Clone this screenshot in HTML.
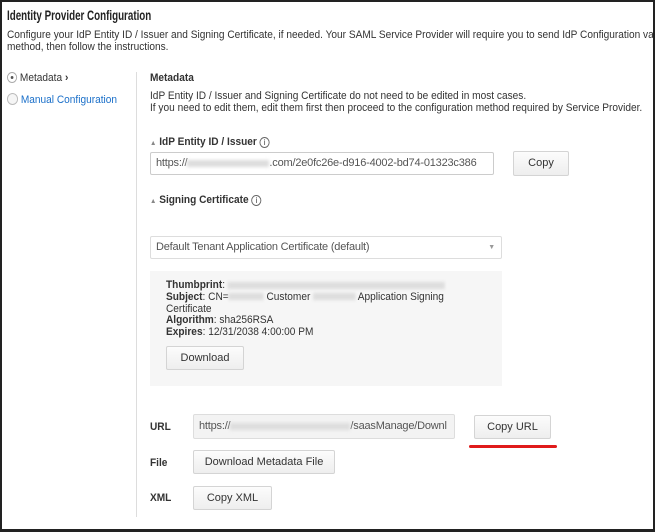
<!DOCTYPE html><html><head><style>
body{margin:0;width:655px;height:532px;overflow:hidden;background:#222;font-family:"Liberation Sans",sans-serif;}
#f{position:absolute;left:2px;top:2px;width:651px;height:527px;background:#fff;overflow:hidden;color:#333;}
.a{position:absolute;white-space:nowrap;font-size:11px;transform:scaleX(0.92);transform-origin:0 0;}
.b{font-weight:bold;}
.btn{position:absolute;border:1px solid #d4d4d4;border-radius:2px;background:linear-gradient(#fcfcfc,#eee);font-size:11px;color:#333;text-align:center;box-sizing:border-box;}
.inp{position:absolute;border:1px solid #ccc;border-radius:2px;box-sizing:border-box;font-size:11px;color:#555;padding-left:5px;white-space:nowrap;overflow:hidden;letter-spacing:-0.2px}
.blur{display:inline-block;height:7px;background:#ddd;filter:blur(1.5px);vertical-align:middle;}
.info{display:inline-block;width:9px;height:9px;border:1px solid #666;border-radius:50%;font-size:8px;line-height:9px;text-align:center;font-weight:normal;vertical-align:middle;}
</style></head><body><div id="f">
<div class="a b" style="left:5px;top:5px;font-size:14px;color:#222;transform:scaleX(0.7)">Identity Provider Configuration</div>
<div class="a" style="left:5px;top:27px;line-height:12px;">Configure your IdP Entity ID / Issuer and Signing Certificate, if needed. Your SAML Service Provider will require you to send IdP Configuration values<br>method, then follow the instructions.</div>
<div class="a" style="left:5px;top:70px;"><span style="display:inline-block;width:9px;height:9px;border:1px solid #aaa;border-radius:50%;vertical-align:-2px;position:relative"><span style="position:absolute;left:3px;top:3px;width:3px;height:3px;background:#555;border-radius:50%"></span></span> Metadata <b>›</b></div>
<div class="a" style="left:5px;top:91px;color:#1a6fc9"><span style="display:inline-block;width:10px;height:10px;border:1px solid #bbb;border-radius:50%;vertical-align:-2px;background:#f5f5f5"></span> Manual Configuration</div>
<div style="position:absolute;left:134px;top:70px;width:1px;height:445px;background:#ddd"></div>
<div class="a b" style="left:148px;top:70px;">Metadata</div>
<div class="a" style="left:148px;top:88px;line-height:12px;">IdP Entity ID / Issuer and Signing Certificate do not need to be edited in most cases.<br>If you need to edit them, edit them first then proceed to the configuration method required by Service Provider.</div>
<div class="a b" style="left:148px;top:134px;"><span style="font-size:7px;color:#888">▲</span> IdP Entity ID / Issuer <span class="info">i</span></div>
<div class="inp" style="left:148px;top:150px;width:344px;height:23px;line-height:21px;">https://<span class="blur" style="width:82px"></span>.com/2e0fc26e-d916-4002-bd74-01323c386</div>
<div class="btn" style="left:511px;top:149px;width:56px;height:25px;line-height:23px;">Copy</div>
<div class="a b" style="left:148px;top:192px;"><span style="font-size:7px;color:#888">▲</span> Signing Certificate <span class="info">i</span></div>
<div class="inp" style="left:148px;top:234px;width:352px;height:23px;line-height:21px;border-color:#ddd">Default Tenant Application Certificate (default)<span style="position:absolute;right:6px;top:0;font-size:7px;color:#999">▼</span></div>
<div style="position:absolute;left:148px;top:269px;width:352px;height:115px;background:#f6f6f6"></div>
<div class="a" style="left:164px;top:278px;line-height:11.8px;"><b>Thumbprint</b>: <span class="blur" style="width:236px"></span><br><b>Subject</b>: CN=<span class="blur" style="width:38px"></span> Customer <span class="blur" style="width:46px"></span> Application Signing<br>Certificate<br><b>Algorithm</b>: sha256RSA<br><b>Expires</b>: 12/31/2038 4:00:00 PM</div>
<div class="btn" style="left:164px;top:344px;width:78px;height:24px;line-height:22px;">Download</div>
<div class="a b" style="left:148px;top:419px;">URL</div>
<div class="inp" style="left:191px;top:412px;width:262px;height:25px;line-height:23px;background:#f3f3f3;border-color:#ddd">https://<span class="blur" style="width:120px"></span>/saasManage/Downl</div>
<div class="btn" style="left:472px;top:413px;width:77px;height:24px;line-height:22px;">Copy URL</div>
<div style="position:absolute;left:467px;top:443px;width:88px;height:3px;background:#e01b1b;border-radius:2px"></div>
<div class="a b" style="left:148px;top:455px;">File</div>
<div class="btn" style="left:191px;top:448px;width:142px;height:24px;line-height:22px;">Download Metadata File</div>
<div class="a b" style="left:148px;top:490px;">XML</div>
<div class="btn" style="left:191px;top:484px;width:79px;height:24px;line-height:22px;">Copy XML</div>
</div></body></html>
